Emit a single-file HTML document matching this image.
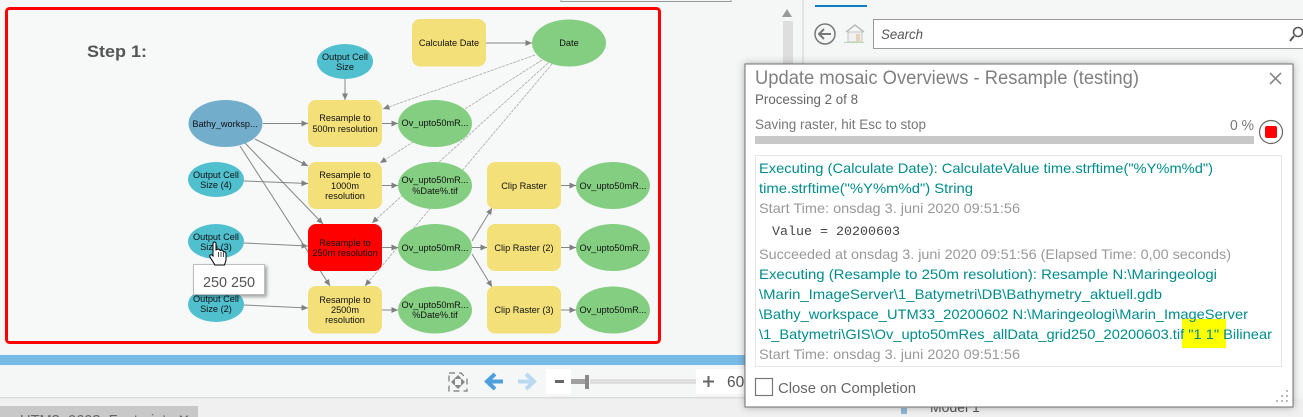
<!DOCTYPE html>
<html><head><meta charset="utf-8"><title>Update mosaic Overviews</title>
<style>
html,body{margin:0;padding:0;background:#f5f7f7;width:1303px;height:417px;overflow:hidden}
svg{display:block}
text{font-family:"Liberation Sans",sans-serif}
.n{font-size:9.2px;fill:#111;text-anchor:middle}
.e{stroke:#868686;stroke-width:1;fill:none}
.d{stroke:#a8a8a8;stroke-width:.8;stroke-dasharray:3 1;fill:none}
.t{fill:#008c8c;font-size:14px}
.g{fill:#999;font-size:14px}
</style></head><body>
<svg width="1303" height="417" viewBox="0 0 1303 417" xmlns="http://www.w3.org/2000/svg">
<defs>
<marker id="a" markerUnits="userSpaceOnUse" markerWidth="8" markerHeight="7" refX="6.500" refY="3" orient="auto"><path d="M0 0L6.500 3L0 6z" fill="#808080"/></marker>
<filter id="s" x="-5%" y="-5%" width="110%" height="110%"><feDropShadow dx="0" dy="0" stdDeviation="4" flood-color="#000" flood-opacity=".3"/></filter>
<filter id="s2" x="-20%" y="-20%" width="140%" height="140%"><feDropShadow dx="2" dy="2" stdDeviation="1.5" flood-color="#000" flood-opacity=".35"/></filter>
</defs>
<rect width="1303" height="417" fill="#f5f7f7"/>

<!-- top pane edge -->
<path d="M561 0V1.500H731V0" fill="none" stroke="#999"/>

<!-- right side -->
<rect x="783" y="21" width="10" height="50" fill="#dedede"/>
<path d="M782 17L787 9L792 17z" fill="#999"/>
<rect x="802" y="0" width="2" height="70" fill="#e2e2e2"/>
<rect x="815" y="5" width="52" height="2" fill="#0f7dc2"/>
<circle cx="825" cy="34" r="10" fill="none" stroke="#777" stroke-width="1.500"/>
<path d="M831 34H819M824 29L819 34L824 39" fill="none" stroke="#777" stroke-width="2"/>
<path d="M846 32L855 25L864 32" fill="none" stroke="#bbb" stroke-width="1.600"/>
<rect x="848" y="32" width="14" height="10" fill="#f1f1f1" stroke="#c4c4c4"/>
<rect x="856" y="34" width="4" height="8" fill="#e6d2b8"/>
<rect x="844" y="42" width="20" height="1" fill="#b6d8b0"/>
<rect x="873.500" y="19.500" width="440" height="29" fill="#fff" stroke="#999"/>
<text x="881" y="39" font-size="14" font-style="italic" fill="#555" textLength="42" lengthAdjust="spacingAndGlyphs">Search</text>
<circle cx="1298" cy="32" r="4.500" fill="none" stroke="#555" stroke-width="1.600"/>
<path d="M1294 36L1290 41" stroke="#555" stroke-width="2"/>

<!-- bars -->
<rect x="0" y="355" width="746" height="10" fill="#78bae6"/>
<rect x="0" y="398" width="1303" height="19" fill="#f0f0f0"/>
<rect x="0" y="397" width="746" height="1.500" fill="#dcdcdc"/>
<rect x="0" y="406" width="198" height="11" fill="#c8c8c8"/>
<text x="20" y="425" font-size="15" fill="#666" textLength="170" lengthAdjust="spacingAndGlyphs">UTM3_0603_Footprints ✕</text>

<!-- toolbar -->
<path d="M449 373H461L467 379V391H449z" fill="none" stroke="#777" stroke-width="1.200" stroke-dasharray="6 4"/>
<path d="M458 375l4 4h-8zM458 389l4-4h-8zM451 382l4-4v8zM465 382l-4-4v8z" fill="#888"/>
<path d="M503 381.500H488M495 374L487 381.500L495 389" fill="none" stroke="#4f9fdc" stroke-width="4"/>
<path d="M518 381.500H533M526 374L534 381.500L526 389" fill="none" stroke="#b8d9f0" stroke-width="4"/>
<rect x="546" y="369" width="25" height="25" fill="#fff"/>
<rect x="555" y="380" width="9" height="3" fill="#666"/>
<rect x="571" y="379" width="15" height="5" fill="#a0a0a0"/>
<rect x="585" y="375" width="4" height="14" fill="#888"/>
<rect x="590" y="379" width="106" height="5" fill="#dedede"/>
<rect x="696" y="369" width="25" height="25" fill="#fff"/>
<path d="M703 381.500H714M708.500 376V387" stroke="#666" stroke-width="2"/>
<rect x="721" y="369" width="24" height="25" fill="#fff"/>
<text x="727" y="387" font-size="15.500" fill="#555">60</text>

<!-- frame -->
<rect x="6.500" y="8.500" width="653" height="334" rx="3" fill="#f7f9f9" stroke="#f00" stroke-width="3"/>
<text x="87" y="57" font-size="17" font-weight="bold" fill="#555" textLength="60" lengthAdjust="spacingAndGlyphs">Step 1:</text>

<!-- edges dashed -->
<path class="d" d="M535 55L383 109" marker-end="url(#a)"/>
<path class="d" d="M542 60L380 163" marker-end="url(#a)"/>
<path class="d" d="M548 63L372 223" marker-end="url(#a)"/>
<path class="d" d="M552 64L365 286" marker-end="url(#a)"/>
<!-- edges solid -->
<path class="e" d="M345 79V100" marker-end="url(#a)"/>
<path class="e" d="M263 123.500H308" marker-end="url(#a)"/>
<path class="e" d="M255 139L308 166" marker-end="url(#a)"/>
<path class="e" d="M245 143L323 224" marker-end="url(#a)"/>
<path class="e" d="M240 146L330 286" marker-end="url(#a)"/>
<path class="e" d="M244 181L308 183.500" marker-end="url(#a)"/>
<path class="e" d="M244 243L308 246" marker-end="url(#a)"/>
<path class="e" d="M244 305L308 308" marker-end="url(#a)"/>
<path class="e" d="M382 123.500H398" marker-end="url(#a)"/>
<path class="e" d="M382 185.500H398" marker-end="url(#a)"/>
<path class="e" d="M382 247.500H398" marker-end="url(#a)"/>
<path class="e" d="M382 310H398" marker-end="url(#a)"/>
<path class="e" d="M486 43H532" marker-end="url(#a)"/>
<path class="e" d="M472 241L492 208" marker-end="url(#a)"/>
<path class="e" d="M472 247.500H487" marker-end="url(#a)"/>
<path class="e" d="M472 254L492 287" marker-end="url(#a)"/>
<path class="e" d="M561 185.500H576" marker-end="url(#a)"/>
<path class="e" d="M561 247.500H576" marker-end="url(#a)"/>
<path class="e" d="M561 310H576" marker-end="url(#a)"/>

<!-- nodes -->
<g fill="#50bfce">
<ellipse cx="345" cy="61.500" rx="28" ry="17.500"/>
<ellipse cx="216" cy="179.500" rx="28" ry="17.500"/>
<ellipse cx="216" cy="241.500" rx="28" ry="17.500"/>
<ellipse cx="216" cy="304.500" rx="28" ry="17.500"/>
</g>
<ellipse cx="225.500" cy="123.500" rx="37" ry="23.500" fill="#72adcb"/>
<g fill="#f3e079">
<rect x="412" y="19" width="74" height="47.500" rx="8"/>
<rect x="308" y="100" width="74" height="47" rx="8"/>
<rect x="308" y="162" width="74" height="47" rx="8"/>
<rect x="308" y="286" width="74" height="47.500" rx="8"/>
<rect x="487" y="162" width="74" height="47" rx="8"/>
<rect x="487" y="224" width="74" height="47" rx="8"/>
<rect x="487" y="286" width="74" height="47.500" rx="8"/>
</g>
<rect x="308" y="224" width="74" height="47" rx="8" fill="#f00"/>
<g fill="#83ce80">
<ellipse cx="569" cy="43" rx="37" ry="23.500"/>
<ellipse cx="435" cy="123.500" rx="37" ry="23.500"/>
<ellipse cx="435" cy="185.500" rx="37" ry="23.500"/>
<ellipse cx="435" cy="247.500" rx="37" ry="23.500"/>
<ellipse cx="435" cy="310" rx="37" ry="23.500"/>
<ellipse cx="613" cy="185.500" rx="37" ry="23.500"/>
<ellipse cx="613" cy="247.500" rx="37" ry="23.500"/>
<ellipse cx="613" cy="310" rx="37" ry="23.500"/>
</g>

<!-- node labels -->
<text class="n" x="345" y="60">Output Cell</text><text class="n" x="345" y="70">Size</text>
<text class="n" x="225" y="127">Bathy_worksp...</text>
<text class="n" x="216" y="178">Output Cell</text><text class="n" x="216" y="188">Size (4)</text>
<text class="n" x="216" y="240">Output Cell</text><text class="n" x="216" y="250">Size (3)</text>
<text class="n" x="216" y="302">Output Cell</text><text class="n" x="216" y="312">Size (2)</text>
<text class="n" x="449" y="46">Calculate Date</text>
<text class="n" x="569" y="46">Date</text>
<text class="n" x="345" y="121">Resample to</text><text class="n" x="345" y="132">500m resolution</text>
<text class="n" x="345" y="178">Resample to</text><text class="n" x="345" y="189">1000m</text><text class="n" x="345" y="199">resolution</text>
<text class="n" x="345" y="246">Resample to</text><text class="n" x="345" y="256">250m resolution</text>
<text class="n" x="345" y="303">Resample to</text><text class="n" x="345" y="313">2500m</text><text class="n" x="345" y="323">resolution</text>
<text class="n" x="435" y="126">Ov_upto50mR...</text>
<text class="n" x="435" y="183">Ov_upto50mR...</text><text class="n" x="435" y="194">%Date%.tif</text>
<text class="n" x="435" y="251">Ov_upto50mR...</text>
<text class="n" x="435" y="308">Ov_upto50mR...</text><text class="n" x="435" y="318">%Date%.tif</text>
<text class="n" x="524" y="189">Clip Raster</text>
<text class="n" x="524" y="251">Clip Raster (2)</text>
<text class="n" x="524" y="313">Clip Raster (3)</text>
<text class="n" x="613" y="189">Ov_upto50mR...</text>
<text class="n" x="613" y="251">Ov_upto50mR...</text>
<text class="n" x="613" y="313">Ov_upto50mR...</text>

<!-- tooltip -->
<rect x="193.500" y="264.500" width="71" height="30" fill="#fff" stroke="#bdbdbd" filter="url(#s2)"/>
<text x="203" y="287" font-size="15" fill="#555" textLength="52" lengthAdjust="spacingAndGlyphs">250 250</text>

<!-- cursor -->
<path d="M213 243.500c0-2 3-2 3 0V250l1-.5c1-1 3 0 3 1l.5 0c1-1 3 0 3 1.500c1-.5 2.500 0 2.500 1.500V260l-1.500 5H215l-5-8c-1-2 1-3 2.500-1.500l.5 .5z" fill="#fff" stroke="#000" stroke-width="1"/>
<path d="M218.500 252V257M221 252V257M223.500 253V257" stroke="#000" stroke-width=".7"/>

<!-- Model 1 behind dialog -->
<rect x="901" y="408" width="6" height="6" fill="#8fb8d8"/>
<text x="930" y="412" font-size="14" fill="#555">Model 1</text>

<!-- dialog -->
<rect x="745" y="64" width="548" height="343" fill="#fff" stroke="#6f6f6f" filter="url(#s)"/>
<text x="755" y="84" font-size="19" fill="#808080" textLength="384" lengthAdjust="spacingAndGlyphs">Update mosaic Overviews - Resample (testing)</text>
<path d="M1270 73L1281 84M1281 73L1270 84" stroke="#888" stroke-width="1.600"/>
<text x="755" y="104" font-size="13.500" fill="#666" textLength="103" lengthAdjust="spacingAndGlyphs">Processing 2 of 8</text>
<text x="755" y="129" font-size="13.500" fill="#777" textLength="171" lengthAdjust="spacingAndGlyphs">Saving raster, hit Esc to stop</text>
<text x="1230" y="130" font-size="14.500" fill="#777" textLength="24" lengthAdjust="spacingAndGlyphs">0 %</text>
<rect x="755" y="136" width="499" height="8" fill="#c8c8c8"/>
<circle cx="1271" cy="132" r="11.500" fill="#fff" stroke="#666" stroke-width="1.200"/>
<rect x="1265" y="126" width="12" height="12" rx="2" fill="#f00"/>

<rect x="755.500" y="155.500" width="526" height="211" fill="#fff" stroke="#e6e6e6"/>
<rect x="1182" y="319" width="44" height="29" fill="#ff0"/>
<text class="t" x="759" y="173" textLength="454" lengthAdjust="spacingAndGlyphs">Executing (Calculate Date): CalculateValue time.strftime("%Y%m%d")</text>
<text class="t" x="759" y="193" textLength="214" lengthAdjust="spacingAndGlyphs">time.strftime("%Y%m%d") String</text>
<text class="g" x="759" y="213" textLength="261" lengthAdjust="spacingAndGlyphs">Start Time: onsdag 3. juni 2020 09:51:56</text>
<text x="772" y="235" font-size="13" fill="#444" style="font-family:'Liberation Mono',monospace" textLength="128" lengthAdjust="spacingAndGlyphs">Value = 20200603</text>
<text class="g" x="759" y="259" textLength="472" lengthAdjust="spacingAndGlyphs">Succeeded at onsdag 3. juni 2020 09:51:56 (Elapsed Time: 0,00 seconds)</text>
<text class="t" x="759" y="279" textLength="458" lengthAdjust="spacingAndGlyphs">Executing (Resample to 250m resolution): Resample N:\Maringeologi</text>
<text class="t" x="759" y="299" textLength="403" lengthAdjust="spacingAndGlyphs">\Marin_ImageServer\1_Batymetri\DB\Bathymetry_aktuell.gdb</text>
<text class="t" x="759" y="319" textLength="489" lengthAdjust="spacingAndGlyphs">\Bathy_workspace_UTM33_20200602 N:\Maringeologi\Marin_ImageServer</text>
<text class="t" x="759" y="339" textLength="513" lengthAdjust="spacingAndGlyphs">\1_Batymetri\GIS\Ov_upto50mRes_allData_grid250_20200603.tif "1 1" Bilinear</text>
<text class="g" x="759" y="359" textLength="261" lengthAdjust="spacingAndGlyphs">Start Time: onsdag 3. juni 2020 09:51:56</text>

<rect x="755.500" y="378.500" width="17" height="17" fill="#fff" stroke="#777" stroke-width="1.200"/>
<text x="778" y="393" font-size="14.500" fill="#666" textLength="138" lengthAdjust="spacingAndGlyphs">Close on Completion</text>
<g fill="#bbb">
<rect x="1286" y="390" width="2" height="2"/>
<rect x="1286" y="395" width="2" height="2"/><rect x="1281" y="395" width="2" height="2"/>
<rect x="1286" y="400" width="2" height="2"/><rect x="1281" y="400" width="2" height="2"/><rect x="1276" y="400" width="2" height="2"/>
</g>
</svg>
</body></html>
